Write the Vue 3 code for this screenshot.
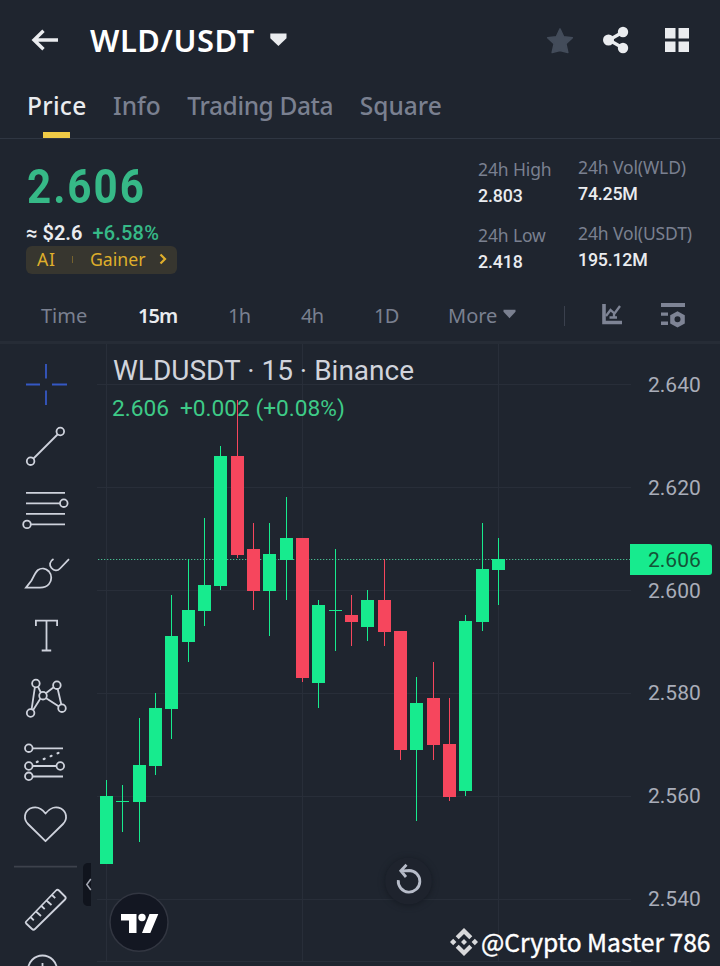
<script setup>
const tabs = ['Price', 'Info', 'Trading Data', 'Square']
const intervals = ['Time', '15m', '1h', '4h', '1D']
const stats = [
  [
    { label: '24h High', value: '2.803' },
    { label: '24h Low', value: '2.418' },
  ],
  [
    { label: '24h Vol(WLD)', value: '74.25M' },
    { label: '24h Vol(USDT)', value: '195.12M' },
  ],
]
const levels = [
  { y: 384, label: '2.640' },
  { y: 487, label: '2.620' },
  { y: 590, label: '2.600' },
  { y: 693, label: '2.580' },
  { y: 796, label: '2.560' },
  { y: 899, label: '2.540' },
]
// left, body top, body bottom, wick top, wick bottom, rising
const candles = [
  [100, 796, 864, 780, 864, 1],
  [116, 801, 802, 785, 832, 1],
  [133, 765, 802, 718, 842, 1],
  [149, 708, 766, 693, 775, 1],
  [165, 636, 709, 595, 739, 1],
  [182, 610, 642, 559, 662, 1],
  [198, 585, 611, 518, 626, 1],
  [214, 456, 586, 446, 590, 1],
  [231, 456, 555, 400, 558, 0],
  [247, 549, 591, 523, 610, 0],
  [263, 554, 591, 523, 636, 1],
  [280, 538, 560, 497, 600, 1],
  [296, 538, 678, 538, 682, 0],
  [312, 605, 683, 600, 708, 1],
  [329, 610, 611, 549, 651, 1],
  [345, 615, 622, 595, 646, 0],
  [361, 600, 627, 590, 641, 1],
  [378, 600, 632, 559, 646, 0],
  [394, 631, 750, 631, 760, 0],
  [410, 703, 750, 677, 821, 1],
  [427, 698, 745, 662, 760, 0],
  [443, 744, 797, 698, 801, 0],
  [459, 621, 791, 615, 796, 1],
  [476, 569, 622, 523, 631, 1],
  [492, 559, 570, 538, 605, 1],
]
</script>

<template>
  <div class="screen">
    <header class="top">
      <svg class="back" width="28" height="22" viewBox="0 0 28 22"><path d="M27 11H3M12.500 1.800L3 11l9.500 9.200" fill="none" stroke="#eaecef" stroke-width="3.400" /></svg>
      <h1>WLD/USDT</h1>
      <svg class="caret" width="17" height="14" viewBox="0 0 17 14"><path d="M.3.500h16.200v4.800L8.400 13 .3 5.300z" fill="#eaecef" /></svg>
      <div class="actions">
        <svg width="28" height="28" viewBox="0 0 28 28"><path d="M14 1.800l3.700 8 8.700 1-6.400 6 1.900 8.800L14 23.500 6.100 25.600 8 16.800l-6.400-6 8.700-1z" fill="#434c5a" stroke="#434c5a" stroke-width="1.400" stroke-linejoin="round" /></svg>
        <svg width="28" height="28" viewBox="0 0 28 28"><path d="M21 6L7 14l14 8" fill="none" stroke="#eaecef" stroke-width="3.300" /><g fill="#eaecef"><circle cx="21" cy="6" r="5.200" /><circle cx="6.500" cy="14" r="5.500" /><circle cx="21" cy="22" r="5.200" /></g></svg>
        <svg width="26" height="26" viewBox="0 0 26 26"><path d="M1 1h10.500v10.500H1zM14.500 1H25v10.500H14.500zM1 14.500h10.500V25H1zM14.500 14.500H25V25H14.500z" fill="#eaecef" /></svg>
      </div>
    </header>

    <nav class="tabs">
      <span v-for="(t, i) in tabs" :key="t" :class="['tab' + i, { active: i === 0 }]">{{ t }}</span>
    </nav>

    <section class="summary">
      <div class="quote">
        <div class="price">2.606</div>
        <div class="sub"><b>≈ $2.6</b><span>+6.58%</span></div>
        <div class="tags">
          <span>AI</span><i></i><span class="gainer">Gainer</span>
          <svg width="8" height="12" viewBox="0 0 8 12"><path d="M1.500 1.500L6 6l-4.500 4.500" fill="none" stroke="#dfae2b" stroke-width="2.200" /></svg>
        </div>
      </div>
      <div v-for="(col, c) in stats" :key="c" class="stats" :class="'col' + c">
        <div v-for="s in col" :key="s.label" class="stat">
          <span>{{ s.label }}</span>
          <b>{{ s.value }}</b>
        </div>
      </div>
    </section>

    <nav class="intervals">
      <span v-for="t in intervals" :key="t" :class="['iv-' + t, { on: t === '15m' }]">{{ t }}</span>
      <span class="more">More</span>
      <svg class="small-caret" width="13" height="10" viewBox="0 0 13 10"><path d="M.5.700h12v2L6.500 9.300.5 2.700z" fill="#7a8090" /></svg>
      <i class="sep"></i>
      <svg class="indicator" width="20" height="21" viewBox="0 0 20 21"><path d="M2 0v18.500h18" fill="none" stroke="#7e8495" stroke-width="3.600" /><path d="M4 12l4.500-6 4 3.500L18 2M7.500 13.500h7.500M12 10v3" fill="none" stroke="#7e8495" stroke-width="2.300" /></svg>
      <svg class="settings" width="26" height="26" viewBox="0 0 26 26"><path d="M1 1h24v4H1zM1 10.500h7v3.300H1zM1 19.500h7v3.500H1z" fill="#7e8495" /><path fill-rule="evenodd" d="M17.500 9.200l7.300 4v8.200l-7.300 4-7.300-4v-8.200zM17.500 14.300a3 3 0 1 0 0 6 3 3 0 1 0 0-6z" fill="#7e8495" /></svg>
    </nav>

    <main class="trading">
      <svg class="tools" width="96" height="622" viewBox="0 344 96 622">
        <path d="M46 364v14.500M46 390.500V405M26 384.500h14M52 384.500h15" stroke="#3558c4" stroke-width="1.800" />
        <g fill="none" stroke="#ced2dc" stroke-width="1.800">
          <path d="M33.500 458.500L57.500 434.500" /><circle cx="30.600" cy="461.200" r="3.800" /><circle cx="60.300" cy="431.500" r="3.800" />
          <path d="M26 492.800h39M26 503.400h34M26 513.800h39M31 524.400h34" /><circle cx="63.800" cy="503.200" r="3.800" /><circle cx="27" cy="524.400" r="3.800" />
          <path d="M26 587.600L31.500 580.500C34.500 575 35.500 572 38 570C41.500 567.600 46 568.500 49 571.500C52 575 52 580.500 49 584C46.500 587 44 587.600 40 587.600zM53.500 559C49.500 561.500 49 565 51.500 568C54 571 57.500 571.200 60 568.500L69 559.200" />
          <path d="M35.900 626v-5.300h21.200v5.300M46.500 620.700v30M41.700 650.500h9.500" />
          <path d="M34.900 687.200L31.600 709.300M38 686.700L41 693M54 687L45.500 693.500M57.600 688.500L61.300 704.500M33 710.300L40.400 698.500M45.800 698L59 706.500" />
          <circle cx="35.900" cy="683.500" r="3.800" /><circle cx="56.900" cy="685.200" r="3.800" /><circle cx="43" cy="695.700" r="3.800" /><circle cx="30.600" cy="713" r="3.800" /><circle cx="62" cy="708.200" r="3.800" />
          <path d="M32.500 748.400H63M32.500 766H56.500M32.500 776.500H63" /><circle cx="28.800" cy="748.200" r="3.800" /><circle cx="28.800" cy="766" r="3.800" /><circle cx="60.300" cy="766" r="3.800" /><circle cx="28.800" cy="776.300" r="3.800" />
          <path d="M36.800 762L62 751.500" stroke-width="2.200" stroke-linecap="round" stroke-dasharray="1 6.500" />
          <path d="M45.500 841.200L28 824C23 819 24.500 811.500 30 808.500C36 806 41.500 808 45.500 813.500C49.500 808 55.500 806 61 808.500C66.500 811.500 68 819 63 824z" stroke-linejoin="round" />
          <path d="M26.200 921.500L56 890.500Q57.500 889 59 890.500L65 896.500Q66.500 898 65 899.500L35 929Q33.500 930.500 32 929L26.200 923.500Q25.200 922.500 26.200 921.500zM30.500 917l3.300 3.300M36 911.500l5 4.500M41.500 906l3.200 3.200M46.500 900.500l5 4.500M52 895l3.200 3.200" />
          <circle cx="42.500" cy="970" r="14.500" /><path d="M42.500 963v6" />
        </g>
        <path d="M14 866.700h63" stroke="#3d424c" stroke-width="1.800" />
        <path d="M91 863v43h-4q-4-1-4-5v-33q0-4 4-5z" fill="#10141d" />
        <path d="M90.800 879L86.800 884.500L90.800 890" fill="none" stroke="#a5a9b4" stroke-width="1.500" />
      </svg>

      <div class="plot">
        <svg width="535" height="622" viewBox="96 344 535 622">
          <g class="grid">
            <path v-for="l in levels" :key="l.y" :d="`M97 ${l.y + 0.5}H631`" />
            <path d="M106.500 344V961M302.500 344V961M498.500 344V961M97 961.500H631" />
          </g>
          <path d="M98 559.500H631" stroke="#48b98f" stroke-width="1.200" stroke-dasharray="1.300 1.700" />
          <g v-for="c in candles" :key="c[0]" :fill="c[5] ? '#17eb8e' : '#f6465d'">
            <rect :x="c[0] + 6" :y="c[3]" width="1" :height="c[4] - c[3]" />
            <rect :x="c[0]" :y="c[1]" width="13" :height="c[2] - c[1]" />
          </g>
          <circle cx="139" cy="922.300" r="29" fill="#131722" stroke="#323641" stroke-width="1.500" />
          <path d="M121 914h15.500v19H129v-12.500h-8zM149.500 914h8.800l-8 19h-8.300z" fill="#fff" /><circle cx="142" cy="917.500" r="3.700" fill="#fff" />
          <g class="reset"><circle cx="408.500" cy="881" r="23.500" fill="#1e232d" /></g>
          <path d="M398.300 880.200A10.800 10.800 0 1 0 409 870.500L401 871.200M406.500 864.800L400.800 870.700L406 877" fill="none" stroke="#b7bcc9" stroke-width="2.800" />
        </svg>
        <div class="legend">
          <div class="symbol">WLDUSDT · 15 · Binance</div>
          <div class="change"><span>2.606</span><span>+0.002 (+0.08%)</span></div>
        </div>
      </div>

      <div class="axis">
        <span v-for="l in levels" :key="l.y">{{ l.label }}</span>
        <b class="last">2.606</b>
      </div>
    </main>

    <div class="credit">
      <svg width="28" height="28" viewBox="0 0 28 28" fill="#d8d9db"><path d="M14 0l8.300 8.300-3 3L14 6l-5.300 5.300-3-3zM14 28l8.300-8.300-3-3L14 22l-5.300-5.300-3 3zM14 11l3 3-3 3-3-3zM3.200 10.800L6.400 14l-3.200 3.200L0 14zM24.800 10.800L28 14l-3.200 3.200-3.200-3.200z" /></svg>
      <span>@Crypto Master 786</span>
    </div>
  </div>
</template>

<style>
body { background: #1f252f; }
</style>

<style scoped>
.screen { position: relative; width: 720px; height: 966px; overflow: hidden; background: #1f252f; color: #eaecef; font-family: "Noto Sans", sans-serif; }
.screen * { box-sizing: border-box; }
svg { display: block; flex: none; }
span, b, h1 { white-space: nowrap; }
.top { display: flex; align-items: center; height: 82px; padding: 0 30px 3px 31px; }
h1 { margin: 1px 0 0 31px; width: 180px; font-size: 30.800px; font-weight: 600; line-height: 40px; letter-spacing: .6px; color: #fff; }
.actions { display: flex; align-items: center; gap: 28px; margin-left: auto; }
.actions svg:first-child { margin-top: 2px; }
.actions svg:last-child { margin-left: 6px; }
.tabs { display: flex; gap: 26.500px; height: 57px; padding: 0 27px; border-bottom: 1px solid #2f3642; font-size: 24.500px; font-weight: 500; line-height: 48px; color: #7a8090; }
.tabs .active { display: flex; flex-direction: column; align-items: center; color: #eaecef; letter-spacing: .3px; }
.tab2 { letter-spacing: -.38px; }
.active::after { content: ""; width: 27px; height: 6px; margin-top: 2px; background: #f0cb46; }
.summary { display: flex; height: 151px; padding-left: 26px; }
.quote { width: 452px; padding-top: 19px; }
.price { height: 58px; width: 140px; margin-left: 1px; transform: scaleX(.86); transform-origin: 0 0; font: 700 49px/58px Roboto, sans-serif; letter-spacing: 2.300px; color: #36b987; }
.sub { display: flex; gap: 10px; height: 30px; align-items: center; margin-top: 2px; font: 500 20px/30px Roboto, sans-serif; }
.sub b { font-weight: 600; }
.sub span { color: #36b987; letter-spacing: .2px; }
.tags { display: flex; align-items: center; width: 151px; height: 28px; margin-top: -2px; padding: 0 0 2px 11px; border-radius: 6px; background: #37362f; color: #dfae2b; font-size: 17.700px; }
.tags span:first-child { letter-spacing: .8px; }
.tags i { width: 1px; height: 7px; margin: 0 17px 0 16px; background: #75622e; }
.tags svg { margin-left: 14px; }
.stats { display: flex; flex-direction: column; width: 100px; padding-top: 17px; }
.col1 { width: 130px; padding-top: 15px; }
.stat { display: flex; flex-direction: column; height: 66px; font-size: 17.500px; letter-spacing: -.12px; line-height: 27px; color: #7a8090; }
.stat b { font: 500 17.800px/26px Roboto, sans-serif; color: #eaecef; }
.col1 b { letter-spacing: -.2px; }
.intervals { display: flex; align-items: center; height: 51px; padding-left: 41px; font-size: 20px; color: #7a8090; }
.intervals span { width: 84px; }
.intervals .iv-Time { width: 97px; }
.intervals .iv-15m { width: 90px; letter-spacing: -1px; }
.intervals .iv-1h { width: 73px; letter-spacing: -.6px; }
.intervals .iv-4h { width: 73px; letter-spacing: -.6px; }
.intervals .iv-1D { width: 74px; letter-spacing: -.6px; }
.intervals .more { width: 56px; }
.intervals .small-caret { margin: -3px 0 0 -1px; }
.intervals .on { font-weight: 650; color: #eaecef; }
.sep { width: 1px; height: 20px; margin: 0 37px 0 48px; background: #3a404d; }
.intervals .indicator { margin-top: -3px; }
.settings { margin-left: 38px; margin-top: -2px; }
.trading { display: flex; height: 625px; border-top: 3px solid #262c36; }
.plot { position: relative; width: 535px; }
.grid path { stroke: #282e39; stroke-width: 1; }
.reset { filter: drop-shadow(0 1px 3px #151a22); }
.legend { position: absolute; left: 17px; top: 9px; font-family: Roboto, sans-serif; }
.symbol { font-size: 28px; line-height: 36px; color: #d1d4dc; white-space: nowrap; }
.change { display: flex; gap: 11px; margin: 5px 0 0 -1px; font-size: 22.700px; line-height: 30px; color: #3ecb87; }
.axis { position: relative; display: flex; flex-direction: column; width: 89px; padding: 26px 0 0 17px; font: 21px/30px Roboto, sans-serif; color: #a9adb9; }
.axis span { flex: none; height: 102.800px; }
.last { position: absolute; left: -1px; top: 200px; width: 82px; height: 31px; padding-left: 18px; border-radius: 0 3px 3px 0; background: #17eb8e; color: #145337; font-weight: 400; line-height: 32px; }
.credit { position: absolute; left: 450px; top: 927px; display: flex; align-items: center; gap: 3px; height: 30px; font: 400 24.600px/30px "Noto Sans CJK SC", sans-serif; color: #fff; }
.credit span { margin-top: -3px; -webkit-text-stroke: .4px #fff; }
</style>
